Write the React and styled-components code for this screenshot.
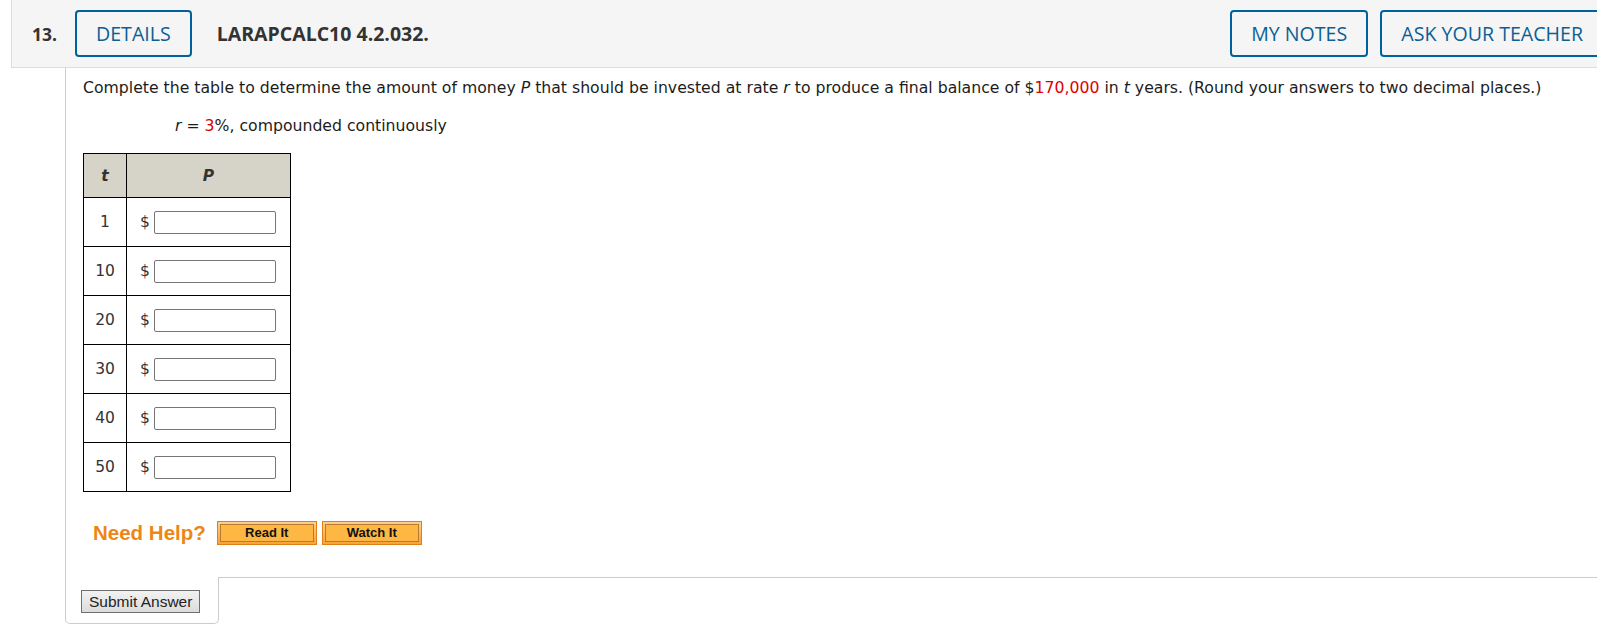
import React from "react";
import styled, { createGlobalStyle } from "styled-components";

const GlobalStyle = createGlobalStyle`
  html, body {
    margin: 0;
    padding: 0;
    background: #fff;
    overflow: hidden;
  }
  body {
    font-family: "DejaVu Sans", Verdana, sans-serif;
    color: #222;
  }
`;

const Page = styled.div`
  width: 1597px;
  overflow: hidden;
`;

const Header = styled.div`
  display: flex;
  align-items: center;
  height: 68px;
  box-sizing: border-box;
  margin-left: 11px;
  margin-right: -12px;
  padding-left: 20px;
  background: #f5f5f5;
  border-left: 1px solid #ddd;
  border-bottom: 1px solid #ddd;
  font-family: "Open Sans", "Noto Sans", sans-serif;
`;

const Num = styled.span`
  font-size: 17.5px;
  font-weight: 700;
  color: #333;
  margin-right: 18px;
`;

const OutlineBtn = styled.button`
  height: 47px;
  box-sizing: border-box;
  padding: 0 ${p => p.$padR || 19}px 0 19px;
  margin-left: ${p => p.$gap || 0}px;
  background: transparent;
  border: 2px solid #00629c;
  border-radius: 4px;
  color: #0b5f95;
  font-family: inherit;
  font-size: 19.6px;
  font-weight: 500;
  cursor: pointer;
`;

const Code = styled.span`
  margin-left: 25px;
  font-size: 19.5px;
  font-weight: 700;
  color: #333;
  flex: 1;
`;

const Body = styled.div`
  margin-left: 65px;
  border-left: 1px solid #ccc;
  padding: 9px 0 0 17px;
  height: 509px;
  box-sizing: border-box;
`;

const Prompt = styled.p`
  margin: 0;
  font-size: 15.7px;
  line-height: 22px;
  color: #1c1c1c;
`;

const Rate = styled(Prompt)`
  margin-top: 16px;
  padding-left: 92px;
`;

const Red = styled.span`
  color: #e00000;
`;

const Table = styled.table`
  margin-top: 16px;
  border-collapse: collapse;
  font-size: 15.5px;
  color: #333;
`;

const Th = styled.th`
  height: 43px;
  padding: 0;
  width: ${p => p.$w}px;
  background: #d6d3c9;
  border: 1px solid #000;
  font-style: italic;
  font-weight: 700;
  color: #333;
`;

const Td = styled.td`
  height: 48px;
  padding: 0;
  border: 1px solid #000;
  text-align: ${p => (p.$center ? "center" : "left")};
`;

const Cell = styled.div`
  display: flex;
  align-items: center;
  padding-left: 13px;
  gap: 4px;
`;

const Input = styled.input`
  width: 122px;
  height: 23px;
  box-sizing: border-box;
  border: 1px solid #767676;
  border-radius: 2px;
  background: #fff;
`;

const HelpRow = styled.div`
  display: flex;
  align-items: center;
  margin: 29px 0 0 10px;
`;

const HelpLabel = styled.span`
  font-family: "Liberation Sans", Arial, sans-serif;
  font-weight: 700;
  font-size: 20.5px;
  color: #ec8716;
  margin-right: 11px;
`;

const HelpBtn = styled.button`
  width: 100px;
  height: 24px;
  box-sizing: border-box;
  margin-right: 5px;
  padding: 2px;
  border: 1px solid #e27f14;
  background: linear-gradient(#fbd08f, #f6a33a);
  cursor: pointer;
`;

const HelpInner = styled.span`
  display: block;
  height: 100%;
  box-sizing: border-box;
  border: 1px solid #b97a2e;
  background: #fdb742;
  font-family: "Liberation Sans", Arial, sans-serif;
  font-weight: 700;
  font-size: 13px;
  line-height: 16px;
  color: #111;
`;

const Footer = styled.div`
  display: flex;
  align-items: flex-start;
  margin-left: 65px;
`;

const SubmitTab = styled.div`
  width: 154px;
  box-sizing: border-box;
  padding: 13px 0 10px 15px;
  border: 1px solid #ccc;
  border-top: none;
  border-radius: 0 0 5px 5px;
`;

const Filler = styled.div`
  flex: 1;
  border-top: 1px solid #ccc;
`;

const SubmitBtn = styled.button`
  height: 23px;
  padding: 0 7px;
  border: 1px solid #6f6f6f;
  border-radius: 0;
  background: linear-gradient(#f2f2f2, #dcdcdc);
  font-family: "Liberation Sans", Arial, sans-serif;
  font-size: 15.5px;
  color: #222;
  cursor: pointer;
`;

const rows = [1, 10, 20, 30, 40, 50];

export default function App() {
  return (
    <Page>
      <GlobalStyle />
      <Header>
        <Num>13.</Num>
        <OutlineBtn>DETAILS</OutlineBtn>
        <Code>LARAPCALC10 4.2.032.</Code>
        <OutlineBtn>MY NOTES</OutlineBtn>
        <OutlineBtn $gap={12} $padR={24}>ASK YOUR TEACHER</OutlineBtn>
      </Header>
      <Body>
        <Prompt>
          Complete the table to determine the amount of money <i>P</i> that should be
          invested at rate <i>r</i> to produce a final balance of $<Red>170,000</Red> in{" "}
          <i>t</i> years. (Round your answers to two decimal places.)
        </Prompt>
        <Rate>
          <i>r</i> = <Red>3</Red>%, compounded continuously
        </Rate>
        <Table>
          <thead>
            <tr>
              <Th $w={42}>t</Th>
              <Th $w={163}>P</Th>
            </tr>
          </thead>
          <tbody>
            {rows.map(t => (
              <tr key={t}>
                <Td $center>{t}</Td>
                <Td>
                  <Cell>
                    $<Input type="text" />
                  </Cell>
                </Td>
              </tr>
            ))}
          </tbody>
        </Table>
        <HelpRow>
          <HelpLabel>Need Help?</HelpLabel>
          <HelpBtn>
            <HelpInner>Read It</HelpInner>
          </HelpBtn>
          <HelpBtn>
            <HelpInner>Watch It</HelpInner>
          </HelpBtn>
        </HelpRow>
      </Body>
      <Footer>
        <SubmitTab>
          <SubmitBtn>Submit Answer</SubmitBtn>
        </SubmitTab>
        <Filler />
      </Footer>
    </Page>
  );
}
